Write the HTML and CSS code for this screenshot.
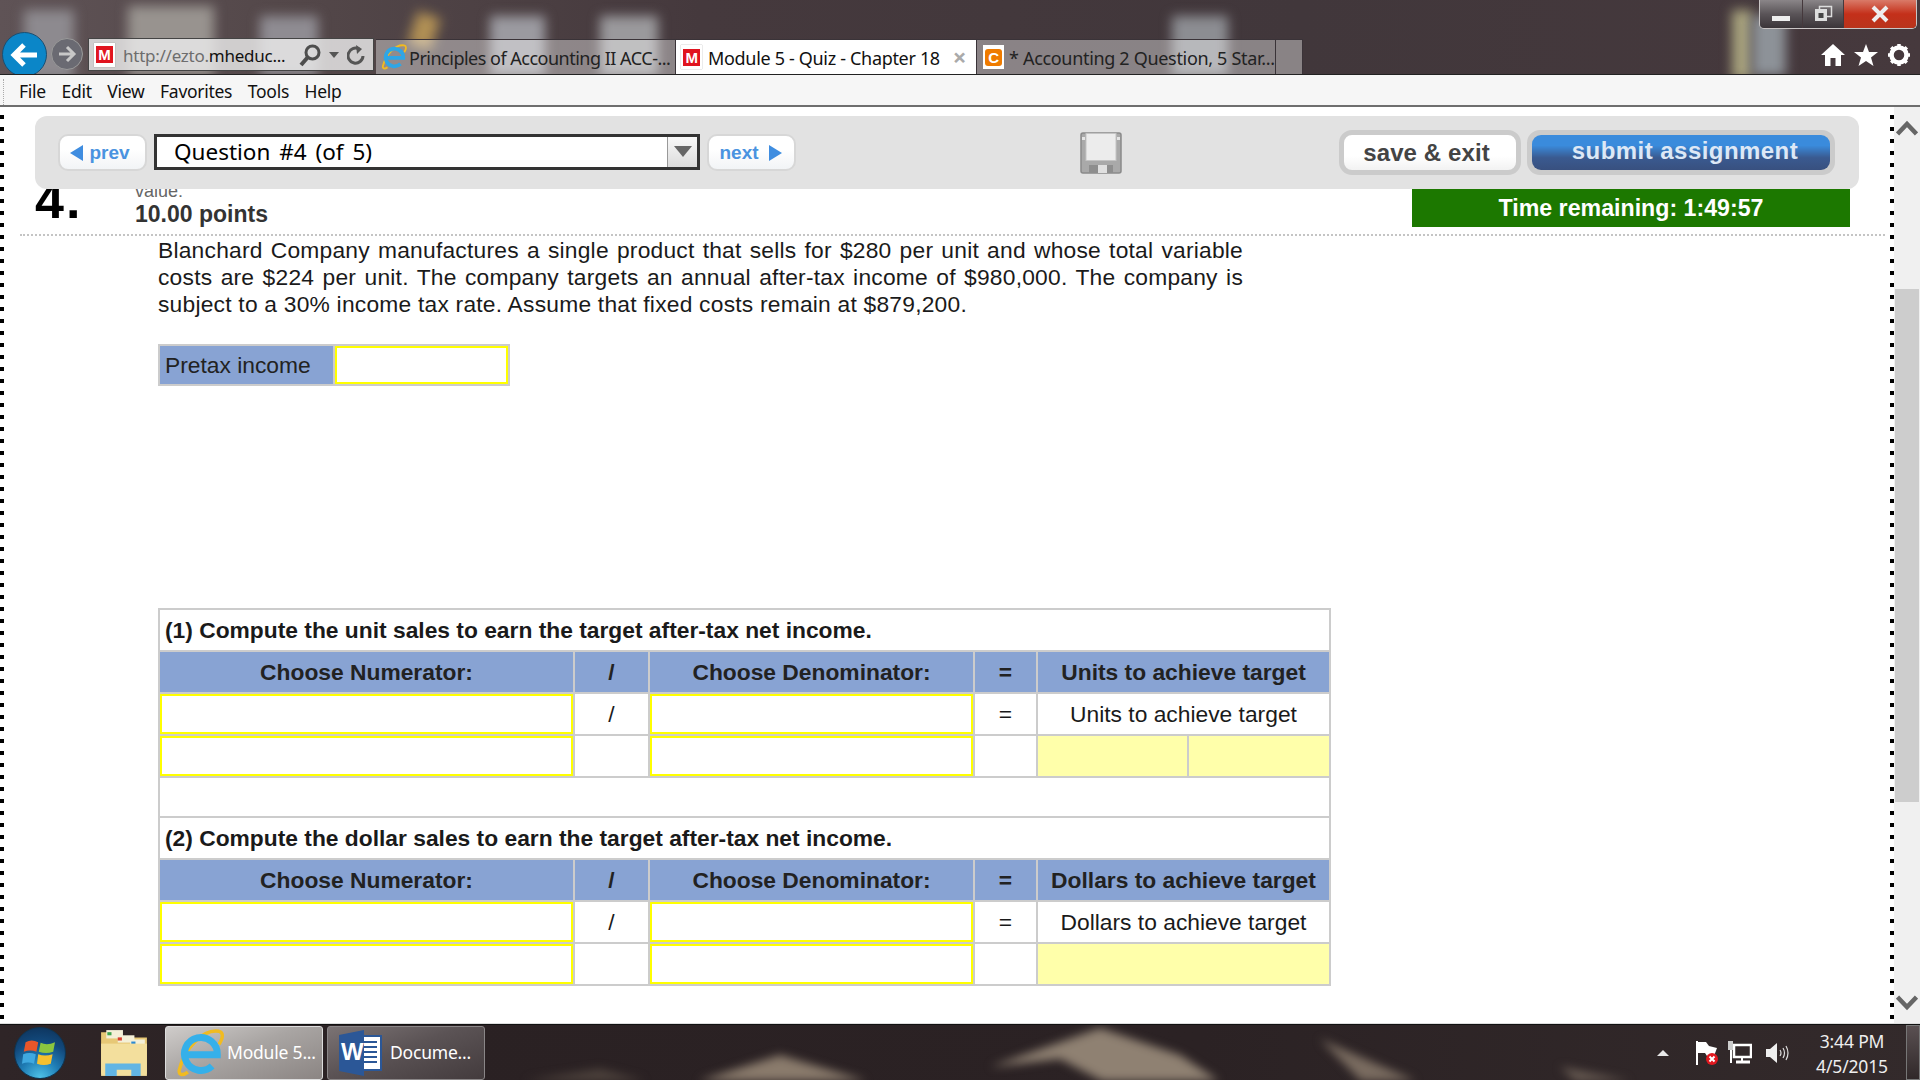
FILE: index.html
```html
<!DOCTYPE html>
<html lang="en">
<head>
<meta charset="utf-8">
<title>Module 5 - Quiz - Chapter 18</title>
<link rel="stylesheet" href="styles.css">
</head>
<body>
<header class="chrome">
  <div class="blob b1"></div><div class="blob b2"></div><div class="blob b3"></div><div class="blob b4"></div>
  <div class="blob b5"></div><div class="blob b6"></div><div class="blob b7"></div><div class="blob b8"></div><div class="blob b9"></div>
  <div class="winctl">
    <div class="wc wc-min"><span class="wc-dash"></span></div>
    <div class="wc wc-max"><svg width="20" height="18" viewBox="0 0 20 18"><rect x="6.500" y="1.500" width="12" height="10" fill="none" stroke="#ddd" stroke-width="1.500"/><rect x="2" y="4" width="12" height="12" fill="#ddd"/><rect x="5.500" y="8" width="5" height="5" fill="#444"/></svg></div>
    <div class="wc wc-close"><svg width="20" height="18" viewBox="0 0 20 18"><path d="M3 2 L17 16 M17 2 L3 16" stroke="#eee" stroke-width="4"/></svg></div>
  </div>
  <nav class="nav">
    <div class="back"><svg width="30" height="30" viewBox="0 0 30 30"><path d="M14 5 L4 15 L14 25 M5 15 H27" fill="none" stroke="#fff" stroke-width="5"/></svg></div>
    <div class="forward"><svg width="20" height="20" viewBox="0 0 20 20"><path d="M10 3 L17 10 L10 17 M16 10 H2" fill="none" stroke="#c8c8c8" stroke-width="3"/></svg></div>
    <div class="addr">
      <span class="page-ico"><span class="m-ico">M</span></span>
      <span class="url"><span class="url-dim">http://ezto.</span>mheduc...</span>
      <svg class="addr-search" width="24" height="24" viewBox="0 0 24 24"><circle cx="14.500" cy="9.500" r="6.500" fill="none" stroke="#4e4e4e" stroke-width="3"/><path d="M10 14 L3 22" stroke="#4e4e4e" stroke-width="4"/></svg>
      <span class="caret"></span>
      <svg class="addr-refresh" width="18" height="22" viewBox="0 0 18 22"><path d="M12 5 A7.500 7.500 0 1 0 16 12" fill="none" stroke="#555" stroke-width="3"/><path d="M9 1 L15 5 L10 10 Z" fill="#555"/></svg>
    </div>
    <div class="tabs">
      <div class="tab tab-a"><svg class="ie-small" width="26" height="28" viewBox="0 0 56 60"><path d="M50 5 C32 2 10 24 4 50 C3 56 9 56 14 52 M50 5 C55 6 55 12 50 20" fill="none" stroke="#f1bb21" stroke-width="4"/><path d="M12 32 H48 A19 19 0 1 0 42 45" fill="none" stroke="#2ea6e6" stroke-width="8"/></svg><span class="tab-t">Principles of Accounting II ACC-...</span></div>
      <div class="tab tab-b"><span class="page-ico"><span class="m-ico">M</span></span><span class="tab-t">Module 5 - Quiz - Chapter 18</span><span class="tab-x">×</span></div>
      <div class="tab tab-c"><span class="page-ico"><span class="c-ico">C</span></span><span class="tab-t">* Accounting 2 Question, 5 Star...</span></div>
      <div class="tab tab-new"></div>
    </div>
    <div class="tools">
      <svg width="24" height="24" viewBox="0 0 24 24"><path d="M12 1 L24 12 H20 V23 H14.500 V15 H9.500 V23 H4 V12 H0 Z" fill="#fff"/></svg>
      <svg width="24" height="24" viewBox="0 0 24 24"><path d="M12 1 L15 9 H24 L17 14.500 L19.500 23 L12 18 L4.500 23 L7 14.500 L0 9 H9 Z" fill="#fff"/></svg>
      <svg width="24" height="24" viewBox="0 0 24 24"><circle cx="12" cy="12" r="7.500" fill="none" stroke="#fff" stroke-width="4.500"/><path d="M12 1 V23 M1 12 H23 M4.200 4.200 L19.800 19.800 M19.800 4.200 L4.200 19.800" stroke="#fff" stroke-width="3.500" stroke-dasharray="4 14"/></svg>
    </div>
  </nav>
</header>
<div class="menubar">
  <span class="grip"></span>
  <span class="menu-i">File</span><span class="menu-i">Edit</span><span class="menu-i">View</span><span class="menu-i">Favorites</span><span class="menu-i">Tools</span><span class="menu-i">Help</span>
</div>
<main class="page">
  <div class="dots dots-l"></div>
  <div class="content">
    <div class="toolbar">
      <button class="pill pill-prev"><span class="tri-l"></span>prev</button>
      <div class="select"><span class="select-t">Question #4 (of 5)</span><span class="select-b"><span class="tri-d"></span></span></div>
      <button class="pill pill-next"><span>next</span><span class="tri-r"></span></button>
      <svg class="save" width="42" height="42" viewBox="0 0 42 42"><rect x="1" y="1" width="40" height="40" rx="2" fill="#a9a9a9" stroke="#8a8a8a" stroke-width="1.500"/><rect x="6" y="1.500" width="30" height="27" fill="#ececec" stroke="#c4c4c4"/><rect x="2" y="5" width="3" height="3" fill="#e5e5e5"/><rect x="37" y="5" width="3" height="3" fill="#e5e5e5"/><rect x="9" y="33" width="24" height="8" fill="#8e8e8e"/><rect x="18" y="33" width="9" height="8" fill="#e0e0e0"/></svg>
      <button class="big big-save">save &amp; exit</button>
      <button class="big big-submit"><span class="big-in">submit assignment</span></button>
    </div>
    <div class="qhead">
      <div class="qnum">4.</div>
      <div class="qval"><div class="qval-l">value:</div><div class="qval-p">10.00 points</div></div>
      <div class="timer">Time remaining: 1:49:57</div>
    </div>
    <p class="prob">Blanchard Company manufactures a single product that sells for $280 per unit and whose total variable costs are $224 per unit. The company targets an annual after-tax income of $980,000. The company is subject to a 30% income tax rate. Assume that fixed costs remain at $879,200.</p>
    <div class="pretax"><div class="pretax-l">Pretax income</div><input class="field" type="text" aria-label="Pretax income"></div>
    <div class="calc">
      <div class="c-title">(1) Compute the unit sales to earn the target after-tax net income.</div>
      <div class="c-h">Choose Numerator:</div><div class="c-h">/</div><div class="c-h">Choose Denominator:</div><div class="c-h">=</div><div class="c-h c-wide">Units to achieve target</div>
      <input class="field" type="text" aria-label="Numerator"><div class="c-d">/</div><input class="field" type="text" aria-label="Denominator"><div class="c-d">=</div><div class="c-d c-wide">Units to achieve target</div>
      <input class="field" type="text" aria-label="Numerator value"><div class="c-d"></div><input class="field" type="text" aria-label="Denominator value"><div class="c-d"></div><div class="c-y"></div><div class="c-y"></div>
      <div class="c-space"></div>
      <div class="c-title">(2) Compute the dollar sales to earn the target after-tax net income.</div>
      <div class="c-h">Choose Numerator:</div><div class="c-h">/</div><div class="c-h">Choose Denominator:</div><div class="c-h">=</div><div class="c-h c-wide">Dollars to achieve target</div>
      <input class="field" type="text" aria-label="Numerator"><div class="c-d">/</div><input class="field" type="text" aria-label="Denominator"><div class="c-d">=</div><div class="c-d c-wide">Dollars to achieve target</div>
      <input class="field" type="text" aria-label="Numerator value"><div class="c-d"></div><input class="field" type="text" aria-label="Denominator value"><div class="c-d"></div><div class="c-y c-wide"></div>
    </div>
  </div>
  <div class="dots dots-r"></div>
  <div class="scroll">
    <svg class="sc-up" width="22" height="16" viewBox="0 0 22 16"><path d="M1.500 14 L11 4 L20.500 14" fill="none" stroke="#666" stroke-width="4.500"/></svg>
    <div class="sc-thumb"></div>
    <svg class="sc-down" width="22" height="16" viewBox="0 0 22 16"><path d="M1.500 2 L11 12 L20.500 2" fill="none" stroke="#666" stroke-width="4.500"/></svg>
  </div>
</main>
<footer class="taskbar">
  <svg class="tb-wall" width="1920" height="56" viewBox="0 0 1920 56"><polygon points="686,60 780,30 880,60" fill="#8a7b6c"/><polygon points="990,42 1100,3 1180,30 1225,60 1110,60 1060,34" fill="#8f8172"/><polygon points="1320,14 1425,60 1365,60" fill="#7a6c60"/><polygon points="1560,42 1650,60 1580,60" fill="#6a5d54"/><polygon points="500,60 600,44 660,60" fill="#4e433d"/></svg>
  <div class="orb"><svg width="36" height="36" viewBox="0 0 30 30"><path d="M3 6 Q8 3 13.500 6 L12 14 Q7 12 1.500 14 Z" fill="#e8562a"/><path d="M15.500 6.500 Q21 9 27.500 6 L26 14 Q20 16 14 14 Z" fill="#8cc63f"/><path d="M1 16 Q6 14 11.500 16 L10 24 Q5 22 0 24 Z" fill="#3fa9e0"/><path d="M13.500 16 Q19 18 25.500 16 L24 24 Q18 26 12.500 24 Z" fill="#f5c02e"/></svg></div>
  <svg class="folder" width="50" height="50" viewBox="0 0 48 48"><path d="M2 4 H18 L22 9 H46 V44 H2 Z" fill="#e7c876"/><rect x="7" y="2" width="16" height="8" fill="#f4f0d8"/><rect x="18" y="7" width="16" height="7" fill="#f4f0d8"/><rect x="30" y="11" width="14" height="7" fill="#f4f0d8"/><rect x="8" y="4" width="4" height="3" fill="#3fa34d"/><rect x="18" y="9" width="4" height="3" fill="#d8412f"/><rect x="31" y="13" width="4" height="3" fill="#2a8ad4"/><rect x="2" y="15" width="44" height="31" fill="#f3df9d"/><path d="M6 46 V34 H40 V46 H31 V40 H17 V46 Z" fill="#62b5e4"/></svg>
  <div class="tb-item tb-on"><svg class="ie-big" width="50" height="52" viewBox="0 0 56 60"><path d="M50 5 C32 2 10 24 4 50 C3 56 9 56 14 52 M50 5 C55 6 55 12 50 20" fill="none" stroke="#f1bb21" stroke-width="4"/><path d="M12 32 H48 A19 19 0 1 0 42 45" fill="none" stroke="#35b0ea" stroke-width="8"/></svg><span>Module 5...</span></div>
  <div class="tb-item tb-off"><svg class="word" width="44" height="48" viewBox="0 0 44 48"><rect x="20" y="7" width="22" height="34" fill="#fff" stroke="#2b5797" stroke-width="2"/><path d="M25 13 H38 M25 18 H38 M25 23 H38 M25 28 H38 M25 33 H38" stroke="#2b5797" stroke-width="2"/><path d="M0 6 L25 1 V47 L0 42 Z" fill="#2b5797"/><text x="2" y="31" class="word-w">W</text></svg><span>Docume...</span></div>
  <div class="tray">
    <span class="tray-up"></span>
    <svg class="tray-flag" width="26" height="26" viewBox="0 0 26 26"><path d="M2 1 V25" stroke="#fff" stroke-width="2"/><path d="M3 2 H11 L14 6 L22 8 L19 16 H12 L10 13 H3 Z" fill="#fff"/><circle cx="17" cy="19" r="6" fill="#e0181f"/><path d="M14.500 16.500 L19.500 21.500 M19.500 16.500 L14.500 21.500" stroke="#fff" stroke-width="2"/></svg>
    <svg class="tray-net" width="24" height="26" viewBox="0 0 24 26"><rect x="6" y="5" width="17" height="12" fill="none" stroke="#fff" stroke-width="2.500"/><rect x="0" y="1" width="5" height="9" fill="#ccc"/><path d="M3 10 V23" stroke="#fff" stroke-width="2"/><path d="M8 22 H22" stroke="#fff" stroke-width="3"/><path d="M14 17 V22" stroke="#fff" stroke-width="2"/></svg>
    <svg class="tray-vol" width="24" height="24" viewBox="0 0 24 24"><path d="M1 8 H5 L12 2 V22 L5 16 H1 Z" fill="#eee"/><path d="M15 9 Q17 12 15 15 M18 7 Q21 12 18 17 M21 5 Q25 12 21 19" fill="none" stroke="#ddd" stroke-width="1.200"/></svg>
    <div class="clock"><div>3:44 PM</div><div>4/5/2015</div></div>
    <div class="show-desk"></div>
  </div>
</footer>
</body>
</html>
```
FILE: styles.css
```css
* { box-sizing: border-box; }
html, body { margin: 0; padding: 0; }
body { width: 1920px; height: 1080px; overflow: hidden; display: flex; flex-direction: column; background: #fff; font-family: "Liberation Sans", Arial, sans-serif; color: #1a1a1a; }

/* window chrome */
.chrome { position: relative; height: 75px; flex: none; overflow: hidden; border-bottom: 1px solid #222; background: linear-gradient(90deg, #5f5356 0, #534749 300px, #45393d 700px, #41373b 1300px, #46393d 1920px); }
.blob { position: absolute; filter: blur(6px); }
.b1 { left: 24px; top: 10px; width: 50px; height: 70px; background: #8d8a8f; }
.b2 { left: 128px; top: 6px; width: 86px; height: 70px; background: #98938f; }
.b3 { left: 260px; top: 16px; width: 58px; height: 60px; background: #8f8c92; }
.b4 { left: 412px; top: 14px; width: 24px; height: 34px; background: #b08f54; transform: rotate(18deg); }
.b5 { left: 490px; top: 16px; width: 55px; height: 60px; background: #9b9aa0; }
.b6 { left: 600px; top: 16px; width: 58px; height: 60px; background: #9a999c; }
.b7 { left: 1172px; top: 16px; width: 56px; height: 60px; background: #8c8d92; }
.b8 { left: 1732px; top: 10px; width: 20px; height: 70px; background: #a8a37e; }
.b9 { left: 1752px; top: 16px; width: 34px; height: 60px; background: #8d9298; }
.winctl { position: absolute; top: 0; right: 3px; width: 158px; height: 29px; display: flex; gap: 1px; border: 1px solid #c9c5c5; border-top: 0; border-radius: 0 0 5px 5px; overflow: hidden; z-index: 2; }
.wc { display: flex; align-items: center; justify-content: center; background: linear-gradient(#8a8588 0, #5a5458 50%, #3b3539 100%); }
.wc-min { width: 42px; align-items: flex-end; padding-bottom: 7px; }
.wc-dash { width: 18px; height: 5px; background: #eee; }
.wc-max { width: 40px; }
.wc-close { flex: 1; background: linear-gradient(#d97a68 0, #c4301a 50%, #b9341c 100%); }
.nav { position: relative; height: 74px; display: flex; align-items: flex-end; }
.back { width: 45px; height: 45px; margin: 0 0 -3px 2px; border-radius: 50%; background: #0b86c8; border: 1px solid #1b4f72; display: flex; align-items: center; justify-content: center; }
.forward { width: 32px; height: 32px; margin: 0 0 4px 4px; border-radius: 50%; background: #6a6a72; border: 1px solid #999; display: flex; align-items: center; justify-content: center; }
.addr { width: 286px; height: 33px; margin: 0 2px 3px 5px; display: flex; align-items: center; padding-left: 5px; background: rgba(235, 235, 235, .82); border: 1px solid #444; }
.page-ico { width: 21px; height: 24px; flex: none; background: #fff; display: flex; align-items: center; justify-content: center; box-shadow: 0 0 1px #888; }
.m-ico, .c-ico { width: 17px; height: 17px; background: #e0141f; color: #fff; font: bold 15px/17px "Liberation Sans", sans-serif; text-align: center; }
.c-ico { background: #ef7b00; border-radius: 3px; }
.url { margin-left: 8px; width: 164px; flex: none; padding-top: 2px; font: 17px/1 "Noto Sans", sans-serif; color: #111; white-space: nowrap; letter-spacing: -.25px; }
.url-dim { color: #6d6d6d; }
.addr-search { margin-left: 11px; flex: none; }
.caret { margin-left: 7px; width: 0; height: 0; border: 5px solid transparent; border-top: 6px solid #555; border-bottom: 0; flex: none; }
.addr-refresh { margin-left: 8px; flex: none; }
.tabs { display: flex; height: 35px; }
.tab { display: flex; align-items: center; height: 35px; padding-left: 6px; background: rgba(255, 255, 255, .38); border: 1px solid #3a3338; border-bottom: 0; border-left: 0; font: 18px/1 "Noto Sans", sans-serif; color: #222; white-space: nowrap; letter-spacing: -.32px; }
.tab-t { margin-left: 5px; padding-top: 2px; }
.tab-a { width: 300px; padding-left: 5px; letter-spacing: -.5px; }
.tab-a .tab-t { margin-left: 2px; }
.tab-b { width: 301px; background: #fff; color: #111; padding-left: 5px; }
.tab-b .tab-t { margin-left: 6px; }
.tab-c { width: 299px; }
.tab-new { width: 27px; }
.tab-x { margin-left: 13px; color: #aaa; font-size: 24px; font-weight: bold; }
.tools { margin-left: auto; margin-right: 9px; margin-bottom: 7px; display: flex; gap: 9px; }

/* menu bar */
.menubar { height: 32px; flex: none; display: flex; align-items: center; padding-top: 3px; background: #f6f6f6; border-bottom: 2px solid #6e6e6e; font: 17.500px/1 "Noto Sans", sans-serif; color: #111; letter-spacing: -.28px; }
.grip { width: 2px; height: 26px; margin: 0 14px 0 3px; border-left: 1px dotted #aaa; }
.menu-i { margin-right: 15.600px; }

/* page */
.page { flex: 1; min-height: 0; display: flex; background: #fff; padding-top: 0; border-bottom: 1px solid #ddd; }
.dots { width: 4px; flex: none; background: repeating-linear-gradient(#000 0 4px, transparent 4px 12px) 0 8px; background-repeat: no-repeat; }
.content { flex: 1; min-width: 0; }
.toolbar { position: relative; z-index: 2; display: flex; align-items: center; margin: 9px 31px 0 31px; height: 73px; padding: 0 24px 0 23px; background: #e2e2e2; border-radius: 12px; }
.pill { height: 37px; width: 89px; padding: 0; display: flex; align-items: center; justify-content: center; gap: 6px; background: linear-gradient(#fff 40%, #f2f4f6); border: 2px solid #d7d7d7; border-radius: 10px; font: bold 19px/1 "Liberation Sans", sans-serif; color: #4a93e0; }
.pill-prev { padding-right: 5px; }
.pill-next { gap: 10px; padding-right: 2px; }
.tri-l { border: 8px solid transparent; border-right: 13px solid #3f8de0; border-left: 0; }
.tri-r { border: 8px solid transparent; border-left: 13px solid #3f8de0; border-right: 0; }
.select { width: 546px; height: 36px; margin: 0 7px 2px; display: flex; border: 3px solid #333; background: #fff; }
.select-t { flex: 1; padding-left: 17px; font: 22.500px/30px "Noto Sans", sans-serif; color: #000; word-spacing: 3px; }
.select-b { width: 30px; border-left: 1px solid #999; background: linear-gradient(#f8f8f8, #dcdcdc); display: flex; align-items: center; justify-content: center; }
.tri-d { border: 9px solid transparent; border-top: 11px solid #666; border-bottom: 0; }
.save { margin-left: 284px; flex: none; }
.big { height: 45px; padding: 0; border: 5px solid #cbcbcb; border-radius: 13px; font: bold 24px/1 "Liberation Sans", sans-serif; }
.big-save { width: 182px; margin-left: auto; padding-right: 7px; letter-spacing: .1px; background: linear-gradient(#fff 60%, #f2f2f2); color: #444; }
.big-submit { width: 308px; margin-left: 6px; background: #cbcbcb; padding: 0; }
.big-in { display: block; height: 35px; padding-left: 8px; line-height: 32px; border-radius: 9px; background: linear-gradient(#3a8bdc 30%, #3a5a90 65%, #38507f); color: #dde8f6; letter-spacing: .45px; }

.qhead { display: flex; height: 47px; border-bottom: 2px dotted #c4c4c4; margin: 0 5px 0 16px; position: relative; }
.qnum { width: 115px; flex: none; margin-top: -26px; padding-left: 15px; font: bold 52px/74px "Liberation Sans", sans-serif; letter-spacing: 2px; color: #000; }
.qval { margin-top: -8px; }
.qval-l { font: 18px/20px "Liberation Sans", sans-serif; color: #666; }
.qval-p { font: bold 23px/26px "Liberation Sans", sans-serif; color: #333; }
.timer { position: absolute; left: 1392px; top: 0; width: 438px; height: 38px; background: #1c7800; color: #fff; font: bold 23.200px/38px "Liberation Sans", sans-serif; text-align: center; }
.prob { width: 1085px; margin: 0 0 0 154px; padding-top: 1px; font: 22.800px/27px "Liberation Sans", sans-serif; letter-spacing: .22px; text-align: justify; color: #1a1a1a; }
.pretax { display: flex; gap: 2px; width: 352px; height: 42px; margin: 26px 0 0 154px; border: 2px solid #ccc; background: #ccc; }
.pretax-l { width: 173px; padding-left: 5px; background: #88a3d3; font: 22.800px/38px "Liberation Sans", sans-serif; color: #222; }
.field { flex: 1; min-width: 0; width: 100%; height: 100%; padding: 0; margin: 0; border: 2px solid #ff0; background: #fff; outline: 0; border-radius: 0; }
.calc { display: grid; grid-template-columns: 413px 73px 323px 61px 149px 140px; grid-template-rows: repeat(4, 40px) 38px repeat(4, 40px); gap: 2px; width: 1173px; margin: 222px 0 0 154px; border: 2px solid #ccc; background: #ccc; font: 22.800px/40px "Liberation Sans", sans-serif; color: #1a1a1a; }
.c-title { grid-column: 1 / -1; padding-left: 5px; background: #fff; font-weight: bold; }
.c-h { background: #88a3d3; font-weight: bold; text-align: center; color: #222; }
.c-d { background: #fff; text-align: center; }
.c-wide { grid-column: span 2; }
.c-y { background: #ffffaa; }
.c-space { grid-column: 1 / -1; background: #fff; }

.scroll { width: 26px; flex: none; position: relative; background: #f0f0f0; }
.sc-thumb { position: absolute; left: 1px; right: 1px; top: 182px; height: 513px; background: #cdcdcd; }
.sc-up { position: absolute; left: 2px; top: 13px; }
.sc-down { position: absolute; left: 2px; bottom: 12px; }

/* task bar */
.taskbar { position: relative; height: 56px; flex: none; display: flex; align-items: center; overflow: hidden; border-top: 1px solid #111; background: linear-gradient(90deg, #2f2527 0, #2a2123 400px, #2b2224 1200px, #332a2b 1920px); color: #fff; }
.tb-wall { position: absolute; left: 0; top: 0; filter: blur(5px); }
.orb { position: relative; width: 52px; height: 52px; margin-left: 14px; border-radius: 50%; border: 1px solid #0e3552; background: radial-gradient(circle at 50% 100%, #4fc3e8 0, #1f7db5 35%, #12497c 65%, #0d2f55 100%); display: flex; align-items: center; justify-content: center; }
.folder { position: relative; margin-left: 33px; flex: none; }
.tb-item { position: relative; display: flex; align-items: center; width: 158px; height: 54px; border: 1px solid #ddd; border-radius: 3px; font: 17.500px/1 "Noto Sans", sans-serif; letter-spacing: -.2px; white-space: nowrap; }
.tb-on { margin-left: 16px; padding-left: 9px; gap: 2px; background: linear-gradient(160deg, #cfccca 0, #a9a5a3 45%, #8b8583 100%); }
.tb-off { margin-left: 4px; padding-left: 11px; gap: 7px; border-color: #8a8687; background: linear-gradient(160deg, #7b7374 0, #5b5355 45%, #433b3d 100%); }
.word-w { font: bold 24px "Liberation Sans", sans-serif; fill: #fff; }
.tray { position: relative; margin-left: auto; height: 100%; display: flex; align-items: center; }
.tray-up { width: 0; height: 0; border: 6px solid transparent; border-bottom: 6px solid #e8e8e8; border-top: 0; margin-right: 26px; }
.tray svg { flex: none; }
.tray-flag { margin-right: 7px; }
.tray-net { margin-right: 13px; }
.clock { width: 100px; margin-left: 13px; margin-right: 4px; padding-top: 2px; font: 17.500px/25px "Noto Sans", sans-serif; text-align: center; color: #eee; letter-spacing: -.15px; }
.show-desk { width: 14px; height: 100%; border: 1px solid #777; background: linear-gradient(#5a5052, #302829); }
```
